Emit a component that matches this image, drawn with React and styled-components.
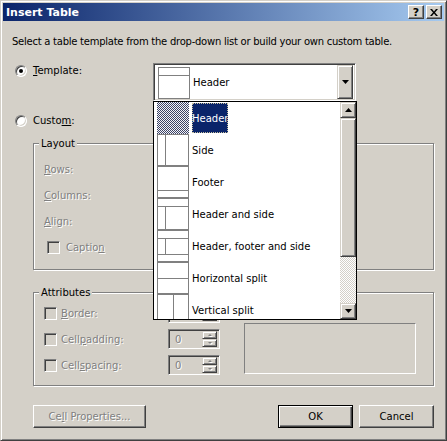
import React from 'react'
import styled, { createGlobalStyle, css } from 'styled-components'

const face = '#d4d0c8'

const GlobalStyle = createGlobalStyle`
  html, body { margin: 0; padding: 0; background: ${face}; }
  body {
    font-family: "DejaVu Sans", Tahoma, sans-serif;
    font-size: 10px;
    color: #000;
  }
  * { box-sizing: border-box; }
`

const raised = css`
  border: 1px solid;
  border-color: ${face} #404040 #404040 ${face};
  box-shadow: inset 1px 1px #fff, inset -1px -1px #808080;
  background: ${face};
`

const sunken = css`
  border: 1px solid;
  border-color: #808080 #fff #fff #808080;
  box-shadow: inset 1px 1px #404040, inset -1px -1px ${face};
`

const disabledText = css`
  color: #808080;
  text-shadow: 1px 1px 0 #fff;
`

const templates = [
  { name: 'Header', lines: [[0, 8, 32, 8]] },
  { name: 'Side', lines: [[8, 0, 8, 32]] },
  { name: 'Footer', lines: [[0, 24, 32, 24]] },
  { name: 'Header and side', lines: [[0, 8, 32, 8], [8, 8, 8, 32]] },
  { name: 'Header, footer and side', lines: [[0, 8, 32, 8], [0, 24, 32, 24], [8, 8, 8, 24]] },
  { name: 'Horizontal split', lines: [[0, 16, 32, 16]] },
  { name: 'Vertical split', lines: [[16, 0, 16, 32]] },
]

function Thumb({ lines, selected }) {
  if (selected) return <Dither />
  return (
    <svg width="32" height="32" viewBox="0 0 32 32" style={{ display: 'block', flex: 'none' }}>
      <rect x="0.5" y="0.5" width="31" height="31" fill="#fff" stroke="#808080" />
      {lines.map(([x1, y1, x2, y2], i) => (
        <line key={i} x1={x1 + 0.5} y1={y1 + 0.5} x2={x2 + 0.5} y2={y2 + 0.5} stroke="#808080" />
      ))}
    </svg>
  )
}

const Arrow = ({ up, color = '#000' }) => (
  <svg width="7" height="4" viewBox="0 0 7 4" style={{ display: 'block' }}>
    <polygon points={up ? '3.5,0 7,4 0,4' : '0,0 7,0 3.5,4'} fill={color} />
  </svg>
)

const SmallArrow = ({ up }) => (
  <svg width="6" height="4" viewBox="0 0 6 4" style={{ display: 'block' }}>
    <polygon points={up ? '3,1 5,3 1,3' : '1,1 5,1 3,3'} fill="#fff" transform="translate(1,1)" />
    <polygon points={up ? '3,1 5,3 1,3' : '1,1 5,1 3,3'} fill="#808080" />
  </svg>
)

function Mn({ children }) {
  return <U>{children}</U>
}

export default function App() {
  return (
    <>
      <GlobalStyle />
      <Window>
        <TitleBar>
          <Title>Insert Table</Title>
          <CaptionButtons>
            <CaptionButton>?</CaptionButton>
            <CaptionButton>
              <svg width="8" height="7" viewBox="0 0 8 7">
                <path d="M0 0h2l2 2.5L6 0h2L5 3.5 8 7H6L4 4.5 2 7H0l3-3.5z" fill="#000" />
              </svg>
            </CaptionButton>
          </CaptionButtons>
        </TitleBar>

        <Body>
          <Intro>Select a table template from the drop-down list or build your own custom table.</Intro>

          <TemplateRow>
            <RadioOption $w={138}>
              <Radio $checked />
              <span><Mn>T</Mn>emplate:</span>
            </RadioOption>
            <ComboWrap>
              <Combo>
                <ComboThumb>
                  <Thumb lines={templates[0].lines} />
                </ComboThumb>
                <ComboText>Header</ComboText>
                <ComboButton><Arrow /></ComboButton>
              </Combo>

              <DropList>
                <Items>
                  {templates.map((t, i) => (
                    <Item key={t.name}>
                      <Thumb lines={t.lines} selected={i === 0} />
                      <ItemText $selected={i === 0}>{t.name}</ItemText>
                    </Item>
                  ))}
                </Items>
                <ScrollBar>
                  <ScrollButton><Arrow up /></ScrollButton>
                  <ScrollThumb />
                  <ScrollTrack />
                  <ScrollButton><Arrow /></ScrollButton>
                </ScrollBar>
              </DropList>
            </ComboWrap>
          </TemplateRow>

          <CustomRow>
            <RadioOption>
              <Radio />
              <span>Custo<Mn>m</Mn>:</span>
            </RadioOption>
          </CustomRow>

          <Group $top={16} $h={127} $pad="19px 0 0 10px">
            <Legend>Layout</Legend>
            <LayoutRows>
              <FieldLabel $disabled><Mn>R</Mn>ows:</FieldLabel>
              <FieldLabel $disabled><Mn>C</Mn>olumns:</FieldLabel>
              <FieldLabel $disabled><Mn>A</Mn>lign:</FieldLabel>
              <CheckRow $indent={3}>
                <CheckBox />
                <FieldLabel $disabled $gap={6}>Captio<Mn>n</Mn></FieldLabel>
              </CheckRow>
            </LayoutRows>
          </Group>

          <Group $top={22} $h={94} $pad="10px 0 0 10px">
            <Legend>Attributes</Legend>
            <AttrGrid>
              <AttrRows>
                <CheckRow>
                  <CheckBox />
                  <FieldLabel $disabled $gap={4}><Mn>B</Mn>order:</FieldLabel>
                  <Spin value="" />
                </CheckRow>
                <CheckRow>
                  <CheckBox />
                  <FieldLabel $disabled $gap={4}>Cell<Mn>p</Mn>adding:</FieldLabel>
                  <Spin value="0" />
                </CheckRow>
                <CheckRow>
                  <CheckBox />
                  <FieldLabel $disabled $gap={4}>Cell<Mn>s</Mn>pacing:</FieldLabel>
                  <Spin value="0" />
                </CheckRow>
              </AttrRows>
              <PreviewBox />
            </AttrGrid>
          </Group>

          <ButtonRow>
            <PushButton $w={113} $disabled>Ce<Mn>l</Mn>l Properties...</PushButton>
            <RightButtons>
              <PushButton $w={75} $default>OK</PushButton>
              <PushButton $w={75}>Cancel</PushButton>
            </RightButtons>
          </ButtonRow>
        </Body>
      </Window>
    </>
  )
}

function Spin({ value }) {
  return (
    <SpinBox>
      <SpinValue>{value}</SpinValue>
      <SpinButtons>
        <SpinButton><SmallArrow up /></SpinButton>
        <SpinButton><SmallArrow /></SpinButton>
      </SpinButtons>
    </SpinBox>
  )
}

const U = styled.span`
  text-decoration: underline;
`

const Window = styled.div`
  width: 447px;
  height: 441px;
  border: 1px solid;
  border-color: ${face} #404040 #404040 ${face};
  box-shadow: inset 1px 1px #fff, inset -1px -1px #808080;
  padding: 2px;
  background: ${face};
  display: flex;
  flex-direction: column;
`

const TitleBar = styled.div`
  height: 18px;
  flex: none;
  display: flex;
  align-items: center;
  justify-content: space-between;
  padding: 0 2px 0 3px;
  background: linear-gradient(to right, #0a246a, #a6caf0);
`

const Title = styled.span`
  color: #fff;
  font-weight: bold;
  font-size: 11px;
`

const CaptionButtons = styled.div`
  display: flex;
  gap: 2px;
`

const CaptionButton = styled.div`
  ${raised};
  border-color: #fff #404040 #404040 #fff;
  box-shadow: inset -1px -1px #808080;
  width: 16px;
  height: 14px;
  display: flex;
  align-items: center;
  justify-content: center;
  font-weight: bold;
  font-size: 11px;
  line-height: 1;
`

const Body = styled.div`
  flex: 1;
  padding: 0 10px 0 30px;
  display: flex;
  flex-direction: column;
`

const Intro = styled.div`
  margin: 14px 0 0 -21px;
  line-height: 13px;
  letter-spacing: -0.25px;
  white-space: nowrap;
`

const TemplateRow = styled.div`
  margin-top: 15px;
  display: flex;
  align-items: flex-start;
  height: 38px;
`

const CustomRow = styled.div`
  margin-top: 12px;
  display: flex;
`

const RadioOption = styled.label`
  margin-left: -18px;
  display: flex;
  align-items: center;
  gap: 6px;
  height: 13px;
  margin-top: 1px;
  width: ${p => (p.$w ? `${p.$w}px` : 'auto')};
  flex: none;
`

const Radio = styled.span`
  position: relative;
  width: 12px;
  height: 12px;
  border-radius: 50%;
  background: #fff;
  border: 1px solid;
  border-color: #808080 #fff #fff #808080;
  box-shadow: inset 1px 1px #404040, inset -1px -1px ${face};
  flex: none;

  &::after {
    content: '';
    display: ${p => (p.$checked ? 'block' : 'none')};
    position: absolute;
    left: 3px;
    top: 3px;
    width: 4px;
    height: 4px;
    border-radius: 50%;
    background: #000;
  }
`

const ComboWrap = styled.div`
  position: relative;
  width: 203px;
  flex: none;
`

const Combo = styled.div`
  ${sunken};
  height: 38px;
  background: #fff;
  display: flex;
  align-items: center;
  padding: 2px;
`

const ComboThumb = styled.div`
  margin-left: 2px;
  margin-top: 1px;
  align-self: flex-start;
`

const ComboText = styled.span`
  margin-left: 3px;
  flex: 1;
  line-height: 13px;
`

const ComboButton = styled.div`
  ${raised};
  width: 16px;
  height: 34px;
  display: flex;
  align-items: center;
  justify-content: center;
`

const DropList = styled.div`
  position: absolute;
  top: 100%;
  left: 0;
  width: 204px;
  height: 219px;
  border: 1px solid #000;
  background: #fff;
  display: flex;
  z-index: 2;
`

const Items = styled.div`
  flex: 1;
  overflow: hidden;
  padding-left: 3px;
`

const Item = styled.div`
  height: 32px;
  display: flex;
  align-items: center;
`

const Dither = styled.div`
  width: 32px;
  height: 32px;
  flex: none;
  background: repeating-conic-gradient(#3c4466 0 25%, #f4f4f8 0 50%) 0 0 / 2px 2px;
`

const ItemText = styled.span`
  margin-left: 3px;
  height: 30px;
  display: flex;
  align-items: center;
  white-space: nowrap;
  ${p =>
    p.$selected
      ? css`
          background: #0a246a;
          color: #fff;
          outline: 1px dotted #c8c0a0;
          outline-offset: -1px;
        `
      : ''}
`

const ScrollBar = styled.div`
  width: 16px;
  flex: none;
  display: flex;
  flex-direction: column;
`

const ScrollButton = styled.div`
  ${raised};
  height: 16px;
  flex: none;
  display: flex;
  align-items: center;
  justify-content: center;
`

const ScrollThumb = styled.div`
  ${raised};
  height: 139px;
  flex: none;
`

const ScrollTrack = styled.div`
  flex: 1;
  background: repeating-conic-gradient(${face} 0 25%, #fff 0 50%) 0 0 / 2px 2px;
`

const Group = styled.div`
  position: relative;
  margin-top: ${p => p.$top}px;
  height: ${p => p.$h}px;
  flex: none;
  border: 1px solid #808080;
  box-shadow: inset 1px 1px #fff, 1px 1px #fff;
  padding: ${p => p.$pad};
`

const Legend = styled.span`
  position: absolute;
  top: -7px;
  left: 5px;
  padding: 0 2px;
  line-height: 13px;
  background: ${face};
`

const LayoutRows = styled.div`
  display: flex;
  flex-direction: column;
  gap: 13px;
`

const FieldLabel = styled.span`
  line-height: 13px;
  margin-left: ${p => p.$gap || 0}px;
  ${p => p.$disabled && disabledText};
`

const CheckRow = styled.div`
  display: flex;
  align-items: center;
  height: ${p => (p.$indent ? 13 : 20)}px;
  margin-left: ${p => p.$indent || 0}px;
`

const CheckBox = styled.span`
  ${sunken};
  width: 13px;
  height: 13px;
  background: ${face};
  flex: none;
`

const AttrGrid = styled.div`
  display: flex;
  align-items: flex-start;
`

const AttrRows = styled.div`
  width: 176px;
  display: flex;
  flex-direction: column;
  gap: 6px;
`

const SpinBox = styled.div`
  ${sunken};
  margin-left: auto;
  width: 52px;
  height: 20px;
  display: flex;
  align-items: center;
  padding: 2px;
`

const SpinValue = styled.span`
  flex: 1;
  padding-left: 4px;
  ${disabledText};
`

const SpinButtons = styled.div`
  display: flex;
  flex-direction: column;
  width: 15px;
  height: 16px;
`

const SpinButton = styled.div`
  ${raised};
  flex: 1;
  display: flex;
  align-items: center;
  justify-content: center;
`

const PreviewBox = styled.div`
  margin: 20px 0 0 24px;
  width: 172px;
  height: 51px;
  border: 1px solid;
  border-color: #808080 #fff #fff #808080;
`

const ButtonRow = styled.div`
  margin-top: 19px;
  display: flex;
  justify-content: space-between;
`

const RightButtons = styled.div`
  display: flex;
  gap: 6px;
`

const PushButton = styled.div`
  width: ${p => p.$w}px;
  height: 23px;
  display: flex;
  align-items: center;
  justify-content: center;
  border: 1px solid;
  border-color: #fff #404040 #404040 #fff;
  box-shadow: inset -1px -1px #808080;
  ${p => p.$disabled && disabledText};
  ${p =>
    p.$default &&
    css`
      border-color: #000;
      box-shadow: inset 1px 1px #fff, inset -1px -1px #404040, inset -2px -2px #808080;
    `}
`
